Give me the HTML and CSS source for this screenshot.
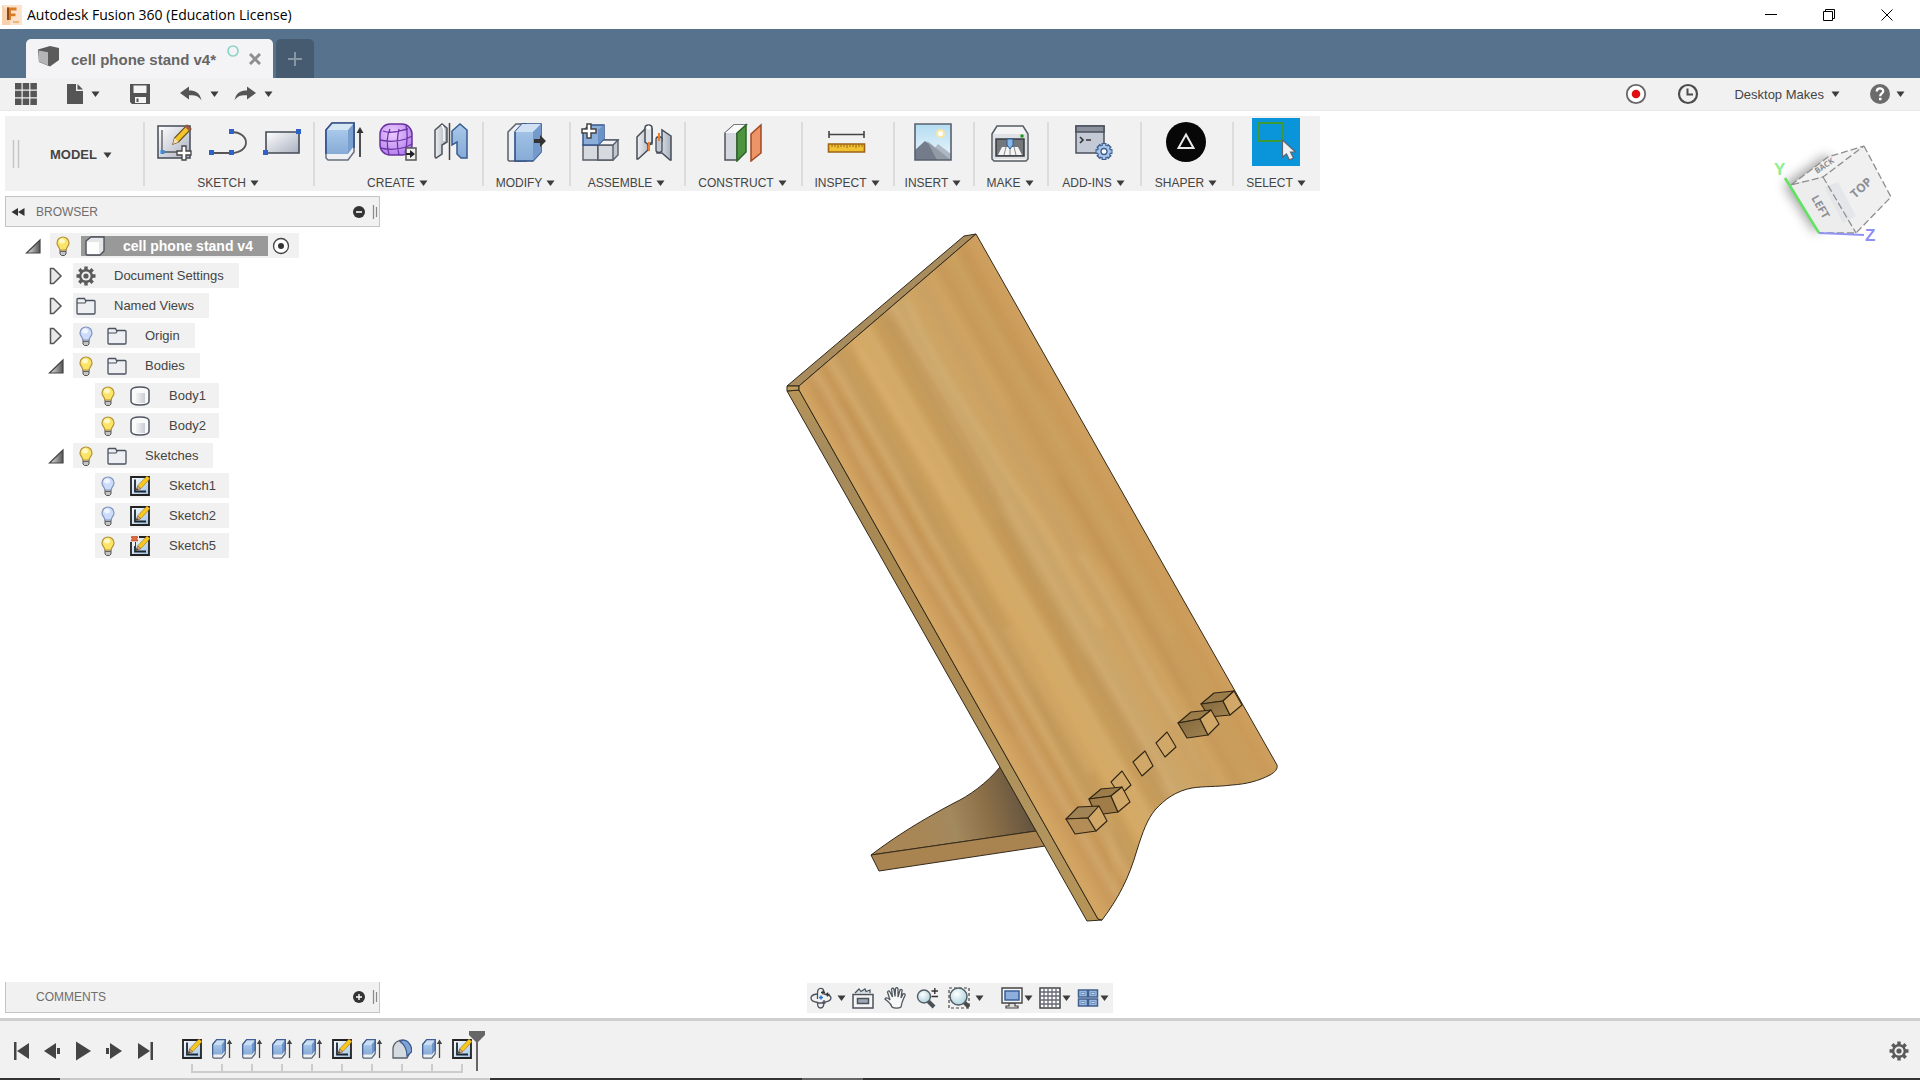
FILE: index.html
```html
<!DOCTYPE html>
<html lang="en">
<head>
    <meta charset="UTF-8">
    <meta name="viewport" content="width=device-width, initial-scale=1.0">
    <title>Autodesk Fusion 360 (Education License)</title>
    <link rel="stylesheet" href="styles.css">
</head>
<body>
    <!-- shared icons -->
    <svg class="sprite" aria-hidden="true">
        <defs>
            <linearGradient id="gBlue" x1="0" y1="0" x2="0" y2="1"><stop offset="0" stop-color="#a9c8ea"/><stop offset="1" stop-color="#86abd6"/></linearGradient>
            <linearGradient id="gGrey" x1="0" y1="0" x2="1" y2="1"><stop offset="0" stop-color="#ffffff"/><stop offset="1" stop-color="#a9b0bf"/></linearGradient>
            <linearGradient id="gSilver" x1="0" y1="0" x2="1" y2="0"><stop offset="0" stop-color="#eef0f2"/><stop offset="1" stop-color="#a7b0bc"/></linearGradient>
            <linearGradient id="gSky" x1="0" y1="0" x2="0" y2="1"><stop offset="0" stop-color="#b5dcf2"/><stop offset="1" stop-color="#eaf6fb"/></linearGradient>
            <linearGradient id="gPage" x1="0" y1="0" x2="1" y2="1"><stop offset="0" stop-color="#ffffff"/><stop offset="1" stop-color="#9cc3e6"/></linearGradient>
            <linearGradient id="gTri" x1="0" y1="0" x2="1" y2="0"><stop offset="0" stop-color="#eeeeee"/><stop offset="1" stop-color="#555555"/></linearGradient>
            <radialGradient id="gPurple" cx="0.4" cy="0.3" r="0.8"><stop offset="0" stop-color="#eccbff"/><stop offset="1" stop-color="#b078ec"/></radialGradient>
            <radialGradient id="gLens" cx="0.4" cy="0.35" r="0.7"><stop offset="0" stop-color="#ffffff"/><stop offset="1" stop-color="#a9d2dc"/></radialGradient>
        </defs>
        <symbol id="caret" viewBox="0 0 9 6"><path d="M0.500 0.500h8L4.500 6z" fill="#3c3c3c"/></symbol>
        <symbol id="gear" viewBox="0 0 20 20">
            <g stroke="#5a5a5a" stroke-width="3.400">
                <path d="M10 0.500v19M0.500 10h19M3.300 3.300l13.400 13.400M16.700 3.300L3.300 16.700"/>
            </g>
            <circle cx="10" cy="10" r="7" fill="#5a5a5a"/>
            <circle cx="10" cy="10" r="4.600" fill="#f0f0f0"/>
            <circle cx="10" cy="10" r="2.600" fill="#5a5a5a"/>
        </symbol>
        <symbol id="bulb-on" viewBox="0 0 20 20">
            <path d="M7 13h6v5l-1.500 1.500h-3L7 18z" fill="#c4c4c4" stroke="#555" stroke-width="1"/><path d="M7 15.500h6" stroke="#666"/>
            <path d="M10 1a6 6 0 0 1 6 6c0 3-2.500 4-3 7H7c-.5-3-3-4-3-7a6 6 0 0 1 6-6z" fill="#fbe568" stroke="#b5923a" stroke-width="1.200"/>
            <ellipse cx="9" cy="5" rx="3" ry="2.500" fill="#fff9c8"/>
        </symbol>
        <symbol id="bulb-off" viewBox="0 0 20 20">
            <path d="M7 13h6v5l-1.500 1.500h-3L7 18z" fill="#c4c4c4" stroke="#555" stroke-width="1"/><path d="M7 15.500h6" stroke="#666"/>
            <path d="M10 1a6 6 0 0 1 6 6c0 3-2.500 4-3 7H7c-.5-3-3-4-3-7a6 6 0 0 1 6-6z" fill="#ccdcfa" stroke="#8094bd" stroke-width="1.200"/>
            <ellipse cx="9" cy="5" rx="3" ry="2.500" fill="#f0f5ff"/>
        </symbol>
        <symbol id="folder" viewBox="0 0 20 20">
            <path d="M1 3.500a1 1 0 0 1 1-1h6.500l1 2H18a1 1 0 0 1 1 1V17a1 1 0 0 1-1 1H2a1 1 0 0 1-1-1z" fill="#edeff2" stroke="#4a525f" stroke-width="1.300"/>
            <path d="M1 7h8l1.500-2.500" fill="none" stroke="#4a525f" stroke-width="1.200"/>
        </symbol>
        <symbol id="body" viewBox="0 0 20 20">
            <path d="M1 5c0-3 4-4 9-4s9 1 9 4v10c0 3-4 4-9 4s-9-1-9-4z" fill="#fafafa" stroke="#4f5662" stroke-width="1.500"/>
            <path d="M6 7h9v10H6z" fill="url(#gSilver)" opacity="0.600"/>
        </symbol>
        <symbol id="sketch" viewBox="0 0 20 20">
            <path d="M1 1h18v18H1z" fill="url(#gPage)" stroke="#222" stroke-width="1.800"/>
            <path d="M5 3.500v12h11" fill="none" stroke="#1c2733" stroke-width="1.800"/>
            <path d="M6 14.500l2-5L17 0l3 2.500-9 10z" fill="#f8c81e" stroke="#a06d10" stroke-width="0.600"/>
            <path d="M6 14.500l1.800-4.500 3 2.500z" fill="#e2a987" stroke="#555" stroke-width="0.500"/>
            <path d="M6 14.500l1-2.200 1.200 1z" fill="#222"/>
        </symbol>
        <symbol id="extrude" viewBox="0 0 20 20">
            <path d="M0.700 5.500l4-4.800h8.500v14l-3.500 4.500h-8l-1-1z" fill="#eef0f3" stroke="#5a6470" stroke-width="1.200"/>
            <path d="M0.700 5.500h9v10h-9z" fill="url(#gBlue)"/>
            <path d="M0.700 5.500l4-4.800h8.500l-3.500 4.800z" fill="#c9def3"/><path d="M9.700 5.500l3.500-4.800v11l-3.500 4z" fill="#6d94c8"/>
            <path d="M0.700 15.500v-10l4-4.800h8.500v11" fill="none" stroke="#3f5f92" stroke-width="1.200"/>
            <path d="M17.500 19V3" stroke="#444" stroke-width="1.300"/><path d="M14.800 5h5.400l-2.700-4.500z" fill="#444"/>
        </symbol>
        <symbol id="expanded" viewBox="0 0 20 20"><path d="M3.500 17L17 4v13z" fill="url(#gTri)" stroke="#444" stroke-width="1.200"/></symbol>
        <symbol id="collapsed" viewBox="0 0 20 20"><path d="M4.500 2.500h3l7.500 7.500-7.500 7.500h-3z" fill="#e9e9e9" stroke="#555" stroke-width="1.500"/></symbol>
    </svg>

    <header class="titlebar">
        <svg class="app-logo" viewBox="0 0 20 20">
            <rect width="20" height="20" fill="#fbe3cd"/><path d="M0 0l8 8v12H0z" fill="#f7d1ad"/>
            <path d="M5 15V2.500h9.500v3H9v3h4.500v2.800H9V15z" fill="#d97b27"/><path d="M5 15V2.500h2V15z" fill="#8c4a17"/><path d="M11 17h6" stroke="#f2a25c" stroke-width="1.500"/>
        </svg>
        <span class="app-title">Autodesk Fusion 360 (Education License)</span>
        <div class="window-buttons">
            <button aria-label="Minimize"><svg viewBox="0 0 12 12"><path d="M0 5.500h12"/></svg></button>
            <button aria-label="Restore"><svg viewBox="0 0 12 12"><path d="M0.500 2.500h9v9h-9zM2.500 2.500v-2h9v9h-2"/></svg></button>
            <button aria-label="Close"><svg viewBox="0 0 12 12"><path d="M0.500 0.500l11 11M11.500 0.500l-11 11"/></svg></button>
        </div>
    </header>

    <nav class="tabs">
        <div class="tab">
            <svg class="tab-cube" viewBox="0 0 21 21"><path d="M0 3.500L12 0l9 2v12l-9 6.500L1 16z" fill="#5b5b5b"/><path d="M0.800 4.500l9.200 1.700v13.300l-9.200-4z" fill="#b5b5b5"/></svg>
            <span class="tab-name">cell phone stand v4*</span>
            <svg class="tab-status" viewBox="0 0 12 12"><circle cx="6" cy="6" r="5" fill="none" stroke="#8fd5c7" stroke-width="1.700"/></svg>
            <button class="tab-close" aria-label="Close tab"><svg viewBox="0 0 12 12"><path d="M1 1l10 10M11 1L1 11" stroke="#8e8e8e" stroke-width="3"/></svg></button>
        </div>
        <button class="tab-new" aria-label="New tab"><svg viewBox="0 0 14 14"><path d="M7 0v14M0 7h14" stroke="#8796a3" stroke-width="2"/></svg></button>
    </nav>

    <div class="quickbar">
        <button class="quick" aria-label="Data panel"><svg class="w24" viewBox="0 0 24 24"><path d="M1 1h6.500v6.500H1zM8.700 1h6.500v6.500H8.700zM16.400 1h6.500v6.500h-6.500zM1 8.700h6.500v6.500H1zM8.700 8.700h6.500v6.500H8.700zM16.400 8.700h6.500v6.500h-6.500zM1 16.400h6.500v6.500H1zM8.700 16.400h6.500v6.500H8.700zM16.400 16.400h6.500v6.500h-6.500z" fill="#555"/></svg></button>
        <button class="quick" aria-label="File"><svg class="w20" viewBox="0 0 20 22"><path d="M2 1h9v7h7v13H2zM12.500 1l5.500 5.500h-5.500z" fill="#555"/></svg><svg class="caret"><use href="#caret"/></svg></button>
        <button class="quick save" aria-label="Save"><svg class="w22" viewBox="0 0 22 22"><path d="M1 1h20v20H3l-2-2z" fill="#555"/><path d="M4.500 2.500h13V10h-13z" fill="#f5f5f5"/><path d="M6 14h11v6H6z" fill="#f5f5f5"/><path d="M7.500 15.500h2V19h-2z" fill="#555"/></svg></button>
        <div class="history">
            <button class="quick" aria-label="Undo"><svg class="w22" viewBox="0 0 22 22"><path d="M0 10l9-6.500v4c7 0 11 2.500 12.500 10-3-4.500-6.500-5.500-12.500-5.200v4.200z" fill="#555"/></svg><svg class="caret"><use href="#caret"/></svg></button>
            <button class="quick" aria-label="Redo"><svg class="w22" viewBox="0 0 22 22"><path d="M22 10l-9-6.500v4C6 7.500 2 10 .5 17.500c3-4.500 6.500-5.500 12.500-5.200v4.200z" fill="#555"/></svg><svg class="caret"><use href="#caret"/></svg></button>
        </div>
        <div class="account">
            <button class="quick" aria-label="Record"><svg class="w22" viewBox="0 0 22 22"><circle cx="11" cy="11" r="9.200" fill="#fff" stroke="#666" stroke-width="1.800"/><circle cx="11" cy="11" r="4.300" fill="#e01010"/></svg></button>
            <button class="quick" aria-label="Job status"><svg class="w22" viewBox="0 0 22 22"><circle cx="11" cy="11" r="9" fill="none" stroke="#4c4c4c" stroke-width="2.200"/><path d="M10.500 5.500v6H16" fill="none" stroke="#4c4c4c" stroke-width="2"/></svg></button>
            <button class="quick user">Desktop Makes<svg class="caret"><use href="#caret"/></svg></button>
            <button class="quick" aria-label="Help"><svg class="w20" viewBox="0 0 20 20"><circle cx="10" cy="10" r="10" fill="#6b6b6b"/><path d="M6.800 7.500c0-4 6.400-4 6.400-.3 0 2.300-3 2.300-3 5" fill="none" stroke="#fff" stroke-width="2.300"/><path d="M9 13.800h2.500v2.400H9z" fill="#fff"/></svg><svg class="caret"><use href="#caret"/></svg></button>
        </div>
    </div>

    <main class="workspace">
        <svg class="model" viewBox="0 111 1920 907">
            <defs>
                <linearGradient id="wood" gradientUnits="userSpaceOnUse" x1="799" y1="390" x2="1000" y2="274">
                    <stop offset="0" stop-color="#d3a563"/><stop offset="0.060" stop-color="#c99a5b"/><stop offset="0.100" stop-color="#cfa468"/>
                    <stop offset="0.140" stop-color="#c79857"/><stop offset="0.180" stop-color="#d0a768"/><stop offset="0.220" stop-color="#c59c5d"/>
                    <stop offset="0.270" stop-color="#c99d5b"/><stop offset="0.310" stop-color="#d5a965"/><stop offset="0.390" stop-color="#d3aa69"/>
                    <stop offset="0.430" stop-color="#c89c5a"/><stop offset="0.480" stop-color="#c39b5d"/><stop offset="0.530" stop-color="#cfa96e"/>
                    <stop offset="0.570" stop-color="#cba66a"/><stop offset="0.630" stop-color="#cfa463"/><stop offset="0.680" stop-color="#caa164"/>
                    <stop offset="0.740" stop-color="#cfa361"/><stop offset="0.790" stop-color="#c7995a"/><stop offset="0.860" stop-color="#cba15f"/>
                    <stop offset="0.920" stop-color="#ca9a58"/><stop offset="1" stop-color="#cfa160"/>
                </linearGradient>
                <linearGradient id="side" x1="0" y1="0" x2="0" y2="1"><stop offset="0" stop-color="#b79557"/><stop offset="0.120" stop-color="#a58b5d"/><stop offset="0.320" stop-color="#aa8951"/><stop offset="0.550" stop-color="#ad8b52"/><stop offset="0.800" stop-color="#b1955f"/><stop offset="1" stop-color="#b69355"/></linearGradient>
                <linearGradient id="leg" gradientUnits="userSpaceOnUse" x1="915" y1="835" x2="1025" y2="805"><stop offset="0" stop-color="#a88655"/><stop offset="0.350" stop-color="#a3895e"/><stop offset="0.650" stop-color="#8d7048"/><stop offset="1" stop-color="#675640"/></linearGradient>
                <linearGradient id="cubeDark" x1="0" y1="0" x2="1" y2="1"><stop offset="0" stop-color="#82683e"/><stop offset="1" stop-color="#a2834f"/></linearGradient>
                <filter id="soft" x="-0.5" y="-0.1" width="2" height="1.200"><feGaussianBlur stdDeviation="3"/></filter>
                <clipPath id="board"><path id="boardPath" d="M799 386L976 234L1172 580L1277 765C1278 769 1275 772 1270 775C1258 781 1247 784 1232 785C1216 787 1205 786 1192 788C1176 791 1165 799 1155 810C1147 820 1143 831 1137 850C1129 878 1118 899 1102 920L1098 919L799 390Z"/></clipPath>
            </defs>
            <g stroke="#33291a" stroke-width="1" stroke-linejoin="round">
                <path d="M1000 767C987 783 969 796 954 803C922 820 896 836 871 855L1036 831Z" fill="url(#leg)"/>
                <path d="M871 855L1036 831L1045 846L879 871Z" fill="#aa8450"/>
                <path d="M787 391L799 390L1098 919L1102 920L1087 921Z" fill="url(#side)"/>
                <path d="M787 386L964 236L976 234L799 386Z" fill="#a88c5d"/>
                <path d="M787 386H799V390L787 391Z" fill="#bd9b5b"/>
            </g>
            <use href="#boardPath" fill="url(#wood)"/>
            <!-- grain -->
            <g clip-path="url(#board)"><g filter="url(#soft)" fill="none" stroke-linecap="round" opacity="0.750">
                <path d="M816 388C850 450 884 520 920 570M842 402C870 440 900 498 928 560M930 580C960 630 985 680 1010 730M1035 690C1050 730 1080 780 1110 850" stroke="#bb8749" stroke-width="3" opacity="0.450"/>
                <path d="M890 320C930 380 965 430 1000 505M1000 520C1030 590 1060 620 1080 680M962 250C990 310 1010 340 1040 390M1060 480C1085 520 1110 560 1140 610" stroke="#bc8a4c" stroke-width="5" opacity="0.400"/>
                <path d="M908 302C935 370 975 420 1010 480C1050 530 1070 580 1100 625M1080 555C1115 600 1135 660 1175 720" stroke="#dcb980" stroke-width="6" opacity="0.550"/>
                <path d="M860 350C900 420 930 460 950 500M1010 630C1035 680 1060 710 1090 770" stroke="#deb376" stroke-width="8" opacity="0.500"/>
                <path d="M1060 345C1090 430 1150 540 1190 610M1175 640C1200 690 1225 730 1250 770M1085 660C1110 700 1130 730 1160 780" stroke="#bd8748" stroke-width="4" opacity="0.350"/>
                <path d="M850 440C890 510 935 590 975 640M1110 800C1105 840 1120 860 1115 890M1130 640C1160 690 1180 720 1200 770" stroke="#d9b377" stroke-width="4" opacity="0.500"/>
                <path d="M1010 410C1040 460 1060 500 1100 560M1120 580C1140 610 1160 640 1185 690M910 480C940 540 960 580 990 620" stroke="#b78d52" stroke-width="3" opacity="0.450"/>
            </g></g>
            <use href="#boardPath" fill="none" stroke="#33291a" stroke-width="1"/>
            <g stroke="#2f2414" stroke-width="1.100" stroke-linejoin="round">
                <path d="M1111 782L1122 771L1131 785L1120 795ZM1133 762L1145 751L1153 766L1142 776ZM1156 743L1167 732L1176 747L1165 757Z" fill="#d2a868"/>
                <path d="M1201 704L1214 693L1234 691L1223 701Z" fill="#9c7d4a"/><path d="M1201 704L1223 701L1230 715L1209 717Z" fill="url(#cubeDark)"/><path d="M1223 701L1234 691L1242 705L1230 715Z" fill="#d2a868"/>
                <path d="M1178 723L1191 712L1211 710L1200 719Z" fill="#9c7d4a"/><path d="M1178 723L1200 719L1208 735L1187 738Z" fill="url(#cubeDark)"/><path d="M1200 719L1211 710L1219 724L1208 735Z" fill="#d2a868"/>
                <path d="M1089 799L1101 789L1122 787L1111 796Z" fill="#9c7d4a"/><path d="M1089 799L1111 796L1118 812L1096 815Z" fill="#a07c48"/><path d="M1111 796L1122 787L1130 802L1118 812Z" fill="#d2a868"/>
                <path d="M1066 819L1078 807L1099 806L1088 818Z" fill="#a08455"/><path d="M1066 819L1088 818L1096 831L1075 834Z" fill="#b38d55"/><path d="M1088 818L1099 806L1107 821L1096 831Z" fill="#d2a868"/>
            </g>
        </svg>

        <svg class="viewcube" viewBox="1760 130 140 120">
            <defs><filter id="shade" x="-0.5" y="-0.5" width="2" height="2"><feGaussianBlur stdDeviation="6"/></filter></defs>
            <path d="M1784 185L1826 155L1850 180L1816 234Z" fill="#777" opacity="0.700" filter="url(#shade)"/>
            <path d="M1791 185L1828 157L1864 146L1823 177Z" fill="#f2f2f2"/>
            <path d="M1791 185L1823 177L1856 233H1819Z" fill="#ededed"/>
            <path d="M1823 177L1864 146L1891 197L1856 233Z" fill="#f0f0f0"/>
            <path d="M1824 187L1838 182L1856 216L1843 223Z" fill="#e4e6e9"/>
            <path d="M1791 185L1828 157L1864 146L1823 177ZM1823 177L1856 233M1864 146L1891 197L1856 233H1819" fill="none" stroke="#8e8e8e" stroke-width="1.300" stroke-dasharray="7 3"/>
            <path d="M1785 178L1819 233" stroke="#62e262" stroke-width="2.500"/>
            <path d="M1819 233L1864 235" stroke="#9292f5" stroke-width="2"/>
            <text class="axis-y" x="1774" y="175">Y</text>
            <text class="axis-z" x="1865" y="241">Z</text>
            <text class="face" transform="translate(1855 199) rotate(-42)">TOP</text>
            <text class="face face-left" transform="translate(1811 198) rotate(60)">LEFT</text>
            <text class="face face-back" transform="translate(1817 174) rotate(-34)">BACK</text>
        </svg>

        <section class="ribbon">
            <div class="group switcher">
                <svg class="grip" viewBox="0 0 8 28"><path d="M1.500 0v28M6.500 0v28" stroke="#c6c6c6" stroke-width="1.500"/></svg>
                <button class="model-button">MODEL<svg class="caret"><use href="#caret"/></svg></button>
            </div>
            <div class="group">
                <div class="tools">
                    <svg viewBox="0 0 40 40"><path d="M4 4h32v32H4z" fill="url(#gGrey)" stroke="#444a55" stroke-width="1.500"/><path d="M8 8v22h20" fill="none" stroke="#555" stroke-width="1.300"/><path d="M6.500 28h4v4h-4z" fill="#3b8de0"/><path d="M19 22l1.500-6L33 3l4 4-12.500 13z" fill="#f3c52b" stroke="#6e5320" stroke-width="1.200"/><path d="M19 22l1.500-6 4 4z" fill="#f7e0b8"/><path d="M31 5l2-2 4 4-2 2z" fill="#a85a45"/><path d="M28 24h4v5h5v4h-5v5h-4v-5h-5v-4h5z" fill="#fff" stroke="#444" stroke-width="1.300"/></svg>
                    <svg viewBox="0 0 40 40"><path d="M3 31h20c20 0 20-21 0-21" fill="none" stroke="#555" stroke-width="1.800"/><path d="M1 28h5v5H1zM21 28h5v5h-5zM21 7h5v5h-5z" fill="#2f62c8"/></svg>
                    <svg viewBox="0 0 40 40"><path d="M4 10h33v21H4z" fill="url(#gGrey)" stroke="#444a55" stroke-width="1.600"/><path d="M34 7h5v5h-5zM1 28h5v5H1z" fill="#2f62c8"/></svg>
                </div>
                <button class="group-label">SKETCH<svg class="caret"><use href="#caret"/></svg></button>
            </div>
            <div class="group">
                <div class="tools">
                    <svg viewBox="0 0 40 40"><path d="M2 8l6-7h22v29l-6 8H4l-2-2z" fill="#eef0f3" stroke="#66707c" stroke-width="1.500"/><path d="M2 8h22v24H2z" fill="url(#gBlue)"/><path d="M2 8l6-7h22l-6 7z" fill="#d5e6f5"/><path d="M24 8l6-7v23l-6 8z" fill="#799fd0"/><path d="M2 32V8l6-7h22v25" fill="none" stroke="#33528a" stroke-width="1.700"/><path d="M36 35V9" stroke="#333" stroke-width="1.700"/><path d="M32.500 11h7L36 5z" fill="#333"/></svg>
                    <svg viewBox="0 0 40 40"><rect x="2" y="2" width="32" height="31" rx="10" fill="url(#gPurple)" stroke="#69329f" stroke-width="1.500"/><path d="M12 7c-4 8-3 18-1 26M21 7c-2 8-2 18 0 26M28 4c2 7 1 20-1 27M2 18c8 2 17 2 26-1l6-3M2 26c8 2 17 2 26-1l6-3M5 9c8 3 15 0 25-2" fill="none" stroke="#6b35a5" stroke-width="1.300"/><path d="M28 26h10v12H28z" fill="#f0f0f0" stroke="#555" stroke-width="1.500"/><path d="M28 32h5" stroke="#222" stroke-width="2"/><path d="M32 28l5 4-5 4z" fill="#222"/></svg>
                    <svg viewBox="0 0 40 40"><path d="M3 8l7-6 5 4v14l-5 3v9l-6 4-1-1z" fill="url(#gSilver)" stroke="#4d535c" stroke-width="1.500"/><path d="M35 8l-7-6-8 7v14l5-3v12l4 4h6z" fill="url(#gBlue)" stroke="#365b90" stroke-width="1.500"/><path d="M17.500 1v37" stroke="#444" stroke-width="1.500"/><path d="M10 3l2 5v11" fill="none" stroke="#fff" stroke-width="1.500"/></svg>
                </div>
                <button class="group-label">CREATE<svg class="caret"><use href="#caret"/></svg></button>
            </div>
            <div class="group">
                <div class="tools">
                    <svg viewBox="0 0 40 40"><path d="M2 10l8-8h10v37H3l-1-1z" fill="#eef0f4" stroke="#59606b" stroke-width="1.500"/><path d="M9 10l7-8h19v28l-8 9H9z" fill="url(#gBlue)" stroke="#2f4f85" stroke-width="1.600"/><path d="M9 10l7-8h19l-8 8z" fill="#cfe1f3"/><path d="M27 10l8-8v28l-8 9z" fill="#7499cb"/><path d="M28 17h6v-4l6 6-6 6v-4h-6z" fill="#333"/></svg>
                </div>
                <button class="group-label">MODIFY<svg class="caret"><use href="#caret"/></svg></button>
            </div>
            <div class="group">
                <div class="tools">
                    <svg viewBox="0 0 40 40"><g stroke="#565d68" stroke-width="1.400"><path d="M3 23h15v15H3z" fill="#d6d9de"/><path d="M18 23l5-5h15v15l-5 5H18z" fill="#c4c8cf"/><path d="M18 23h15v15H18z" fill="#d6d9de"/><path d="M18 23l5-5h15l-5 5z" fill="#f2f3f5"/></g><path d="M3 9l6-6h15v14l-6 6H3z" fill="#8caeda" stroke="#34568d" stroke-width="1.500"/><path d="M18 8l6-5v14l-6 6z" fill="#6b92c6"/><path d="M7 2h4v5h5v4h-5v5H7v-5H2V7h5z" fill="#fff" stroke="#444" stroke-width="1.500"/></svg>
                    <svg viewBox="0 0 40 40"><path d="M3 15L11 7h7v15l-4 1v5L4 37H3z" fill="url(#gSilver)" stroke="#454c58" stroke-width="1.500"/><path d="M11 6c0-4 7-4 7 0v14l-3 3-4-3z" fill="#dfe2e6" stroke="#454c58" stroke-width="1.500"/><circle cx="14.500" cy="5.500" r="2" fill="#fff"/><path d="M37 14l-9-6v11h-5v12h5l8 7h1z" fill="url(#gSilver)" stroke="#454c58" stroke-width="1.500"/><path d="M22 17c0-3 6-3 6 0v12c-2 2-4 2-6 0z" fill="#c3c9d2" stroke="#454c58" stroke-width="1.300"/><path d="M15 20v9M25 11v8" stroke="#ef7c26" stroke-width="2"/></svg>
                </div>
                <button class="group-label">ASSEMBLE<svg class="caret"><use href="#caret"/></svg></button>
            </div>
            <div class="group">
                <div class="tools">
                    <svg viewBox="0 0 40 40"><path d="M2 11l9-8h12L14 11v27H2z" fill="#d4d7de" stroke="#4d535c" stroke-width="1.500"/><path d="M2 11l9-8h12l-9 8z" fill="#fafafa"/><path d="M14 11l9-8v27l-9 9z" fill="#4e9440" stroke="#2c6426" stroke-width="1.500"/><path d="M28 12l10-9v28l-10 8z" fill="#ed9566" stroke="#a04a23" stroke-width="1.500"/></svg>
                </div>
                <button class="group-label">CONSTRUCT<svg class="caret"><use href="#caret"/></svg></button>
            </div>
            <div class="group">
                <div class="tools">
                    <svg viewBox="0 0 40 40"><path d="M2 9v7M37 9v7M2 12.500h35" stroke="#454545" stroke-width="1.600"/><path d="M1.500 22h36v8h-36z" fill="#f0c231" stroke="#9d6419" stroke-width="1.600"/><path d="M5 22v3M8 22v3M11 22v4M14 22v3M17 22v3M20 22v4M23 22v3M26 22v3M29 22v4M32 22v3M35 22v3" stroke="#9d6419"/></svg>
                </div>
                <button class="group-label">INSPECT<svg class="caret"><use href="#caret"/></svg></button>
            </div>
            <div class="group">
                <div class="tools">
                    <svg viewBox="0 0 40 40"><path d="M2 2h36v36H2z" fill="url(#gSky)"/><path d="M17 32l8-10 13 10v6H17z" fill="#adb9c2"/><path d="M2 28l10-9 10 7 14 12H2z" fill="#747b8a"/><path d="M14 19l24 19H24z" fill="#939ba7"/><circle cx="27.500" cy="11.500" r="4.500" fill="#fae5a0"/><circle cx="27.500" cy="11.500" r="2.500" fill="#fff"/><path d="M2 2h36v36H2z" fill="none" stroke="#59616d" stroke-width="1.600"/></svg>
                </div>
                <button class="group-label">INSERT<svg class="caret"><use href="#caret"/></svg></button>
            </div>
            <div class="group">
                <div class="tools">
                    <svg viewBox="0 0 40 40"><path d="M2 12l5-8h26l5 8v25l-2 2H4l-2-2z" fill="#f4f4f5" stroke="#565c66" stroke-width="1.500"/><path d="M3 12h34v25H3z" fill="#dfe1e4"/><path d="M6 17h28v17H6z" fill="#73767b" stroke="#383b40" stroke-width="1.500"/><path d="M12 25h16l4 8H8z" fill="#f4f4f4"/><path d="M16 25l-2 8M20 25v8M24 25l2 8" stroke="#888"/><path d="M17 17h6v6l-3 4-3-4z" fill="#88b8e6" stroke="#2c5f9d"/><path d="M30.500 12.500h3v3h-3z" fill="#159515"/></svg>
                </div>
                <button class="group-label">MAKE<svg class="caret"><use href="#caret"/></svg></button>
            </div>
            <div class="group">
                <div class="tools">
                    <svg viewBox="0 0 40 40"><path d="M2 4h28v27H2z" fill="#c3c9d5" stroke="#4b525e" stroke-width="1.500"/><path d="M2 4h28v6H2z" fill="#8b919d" stroke="#4b525e" stroke-width="1.500"/><path d="M6 15l3 3-3 3M12 18h5" fill="none" stroke="#333" stroke-width="1.600"/><g stroke="#3e5f91" stroke-width="5"><path d="M30 21v17M21.500 29.500h17M24 23.500l12 12M36 23.500l-12 12"/></g><g stroke="#a9c5e8" stroke-width="2.400"><path d="M30 22v15M22.500 29.500h15M25 24.500l10 10M35 24.500l-10 10"/></g><circle cx="30" cy="29.500" r="6" fill="#a9c5e8"/><circle cx="30" cy="29.500" r="3" fill="#fff" stroke="#3e5f91" stroke-width="1.300"/></svg>
                </div>
                <button class="group-label">ADD-INS<svg class="caret"><use href="#caret"/></svg></button>
            </div>
            <div class="group">
                <div class="tools">
                    <svg viewBox="0 0 40 40"><circle cx="20" cy="20" r="20" fill="#070707"/><path d="M20 12.500L27.500 26h-15z" fill="none" stroke="#e8e8e8" stroke-width="2"/></svg>
                </div>
                <button class="group-label">SHAPER<svg class="caret"><use href="#caret"/></svg></button>
            </div>
            <div class="group">
                <div class="tools">
                    <svg class="selected" viewBox="0 0 48 48"><path d="M6 5h25v18H6z" fill="none" stroke="#3e9a35" stroke-width="2"/><path d="M30.500 22v17l4-3 3 6 4-2-3-6h5z" fill="#f0f2f5" stroke="#5d6670" stroke-width="1.200"/></svg>
                </div>
                <button class="group-label">SELECT<svg class="caret"><use href="#caret"/></svg></button>
            </div>
        </section>

        <aside class="browser">
            <div class="panel">
                <button class="panel-icon" aria-label="Collapse"><svg viewBox="0 0 14 14"><path d="M7 3v8L0.500 7zM13.500 3v8L7 7z" fill="#333"/></svg></button>
                <span class="panel-title">BROWSER</span>
                <button class="panel-icon" aria-label="Hide"><svg viewBox="0 0 14 14"><circle cx="7" cy="7" r="6" fill="#333"/><path d="M4 7h6" stroke="#fff" stroke-width="1.600"/></svg></button>
                <svg class="panel-grip" viewBox="0 0 6 14"><path d="M1.500 0v14M4.500 2v10" stroke="#888" stroke-width="1.200"/></svg>
            </div>
            <ul class="tree">
                <li>
                    <div class="row">
                        <svg><use href="#expanded"/></svg>
                        <div class="node root"><svg><use href="#bulb-on"/></svg>
                            <span class="active"><svg viewBox="0 0 20 20"><path d="M1 5l5-4h13v14l-4 4H2l-1-1z" fill="#e4e6e9" stroke="#4a4f57" stroke-width="1.300"/><path d="M2 6h12v12H2z" fill="#fdfdfd"/></svg>cell phone stand v4</span>
                            <svg viewBox="0 0 20 20"><circle cx="10" cy="10" r="7.500" fill="#fff" stroke="#444" stroke-width="1.300"/><circle cx="10" cy="10" r="3" fill="#333"/></svg>
                        </div>
                    </div>
                    <ul>
                        <li><div class="row"><svg><use href="#collapsed"/></svg><div class="node"><svg><use href="#gear"/></svg><span>Document Settings</span></div></div></li>
                        <li><div class="row"><svg><use href="#collapsed"/></svg><div class="node"><svg><use href="#folder"/></svg><span>Named Views</span></div></div></li>
                        <li><div class="row"><svg><use href="#collapsed"/></svg><div class="node"><svg><use href="#bulb-off"/></svg><svg><use href="#folder"/></svg><span>Origin</span></div></div></li>
                        <li>
                            <div class="row"><svg><use href="#expanded"/></svg><div class="node"><svg><use href="#bulb-on"/></svg><svg><use href="#folder"/></svg><span>Bodies</span></div></div>
                            <ul class="leaves">
                                <li><div class="row"><div class="node"><svg><use href="#bulb-on"/></svg><svg><use href="#body"/></svg><span>Body1</span></div></div></li>
                                <li><div class="row"><div class="node"><svg><use href="#bulb-on"/></svg><svg><use href="#body"/></svg><span>Body2</span></div></div></li>
                            </ul>
                        </li>
                        <li>
                            <div class="row"><svg><use href="#expanded"/></svg><div class="node"><svg><use href="#bulb-on"/></svg><svg><use href="#folder"/></svg><span>Sketches</span></div></div>
                            <ul class="leaves">
                                <li><div class="row"><div class="node"><svg><use href="#bulb-off"/></svg><svg><use href="#sketch"/></svg><span>Sketch1</span></div></div></li>
                                <li><div class="row"><div class="node"><svg><use href="#bulb-off"/></svg><svg><use href="#sketch"/></svg><span>Sketch2</span></div></div></li>
                                <li><div class="row"><div class="node"><svg><use href="#bulb-on"/></svg><svg viewBox="0 0 20 20"><use href="#sketch" width="20" height="20"/><path d="M0 0h9v6H5v4H4V6H0z" fill="#f0f0f0"/><path d="M1.500 0.500h6v1.500H6.500l1.500 3H1l1.500-3h-1z" fill="#e06b3c" stroke="#b53d1c" stroke-width="0.600"/></svg><span>Sketch5</span></div></div></li>
                            </ul>
                        </li>
                    </ul>
                </li>
            </ul>
        </aside>

        <div class="canvas-foot">
            <div class="panel comments">
                <span class="panel-title">COMMENTS</span>
                <button class="panel-icon" aria-label="Show comments"><svg viewBox="0 0 14 14"><circle cx="7" cy="7" r="6" fill="#333"/><path d="M4 7h6M7 4v6" stroke="#fff" stroke-width="1.400"/></svg></button>
                <svg class="panel-grip" viewBox="0 0 6 14"><path d="M1.500 0v14M4.500 2v10" stroke="#888" stroke-width="1.200"/></svg>
            </div>
            <div class="navbar">
                <button class="nav-wide" aria-label="Orbit"><svg viewBox="0 0 22 22"><g fill="none" stroke="#4c535d" stroke-width="1.300"><path d="M14 7c5 .5 7 2.500 7 4 0 2.500-4 4-9 4.500M8 15.500C3 15 1 13 1 11s2-3.500 6-4"/><path d="M7.500 12V6c0-6 6-6 6.500-1M14 13v2c0 4-1.500 6-3.500 6s-3-2-3-5h8"/></g><path d="M9 10.500h4M11 8.500v4" stroke="#1c78d8" stroke-width="1.500"/><path d="M13 3.500v4M11 5.500h4M17.500 5.500v4M15.500 7.500h4" stroke="#333" stroke-width="1.300"/></svg><svg class="caret"><use href="#caret"/></svg></button>
                <button aria-label="Look at"><svg viewBox="0 0 22 22"><path d="M3 6l4-4 2 2.500L13 2l1 2.500 4-1.500v3" fill="#d5dee0" stroke="#4c535d" stroke-width="1.200"/><path d="M1 7.500h20V21H1z" fill="#f5f5f5" stroke="#4c535d" stroke-width="1.500"/><path d="M5.500 11.500h11v5h-11z" fill="#9da7b8" stroke="#4c535d" stroke-width="1.500"/></svg></button>
                <button aria-label="Pan"><svg viewBox="0 0 22 22"><path d="M8 20c-1-4-4-5-7-8 1-2 3-1 5 1L3.500 5c1-2 2-1 2.500 0l2.500 5-1-8c1-1.500 2-1 2.500.5l1 7 .5-8c1-1.500 2-1 2.500.5v8l2-7c1-1 2.500-.5 2 1L17 11l2-4c1-1 2.500 0 2 1.500C19 13 18 14 17 20c-2 1.500-7 1.500-9 0z" fill="#f8f8f8" stroke="#50575f" stroke-width="1.300"/></svg></button>
                <button aria-label="Zoom"><svg viewBox="0 0 22 22"><path d="M12 14l6 6" stroke="#4a5157" stroke-width="4"/><circle cx="8" cy="9.500" r="6.500" fill="url(#gLens)" stroke="#555e66" stroke-width="1.400"/><path d="M15.500 4H22M18.800 1v6M15.500 9.500H22" stroke="#333" stroke-width="1.400"/></svg></button>
                <button class="nav-wide" aria-label="Zoom window"><svg viewBox="0 0 22 22"><path d="M1 1h20v20H1z" fill="none" stroke="#444" stroke-width="1.200" stroke-dasharray="3 2"/><path d="M15 14l6 6" stroke="#4a4a4a" stroke-width="4"/><circle cx="10.500" cy="9.500" r="8.500" fill="url(#gLens)" stroke="#555e66" stroke-width="1.500"/></svg><svg class="caret"><use href="#caret"/></svg></button>
                <div class="nav-views">
                    <button aria-label="Display settings"><svg viewBox="0 0 22 22"><path d="M8 16h6v3h3v2H5v-2h3z" fill="#ddd" stroke="#444" stroke-width="1.200"/><path d="M1 1h20v15H1z" fill="#f6f6f6" stroke="#444" stroke-width="1.400"/><path d="M4 4h14v9H4z" fill="#8eaedb" stroke="#37629b" stroke-width="1.500"/></svg><svg class="caret"><use href="#caret"/></svg></button>
                    <button aria-label="Grid and snaps"><svg viewBox="0 0 22 22"><path d="M1 1h20v20H1z" fill="#fff" stroke="#444" stroke-width="1.500"/><path d="M5 1v20M9 1v20M13 1v20M17 1v20M1 5h20M1 9h20M1 13h20M1 17h20" stroke="#656a75" stroke-width="1.300"/></svg><svg class="caret"><use href="#caret"/></svg></button>
                    <button aria-label="Viewports"><svg viewBox="0 0 22 22"><g fill="#9bb9e0" stroke="#3f5f8d" stroke-width="1.500"><path d="M1.500 3h9v7h-9zM11.500 3h9v7h-9zM1.500 12h9v7h-9zM11.500 12h9v7h-9z"/></g><path d="M4 5.500h4v2H4zM14 5.500h4v2h-4zM4 14.500h4v2H4zM14 14.500h4v2h-4z" fill="#c6d9f0" stroke="#6185b5" stroke-width="0.800"/></svg><svg class="caret"><use href="#caret"/></svg></button>
                </div>
            </div>
        </div>
    </main>

    <footer class="timeline">
        <div class="playback">
            <button aria-label="Go to start"><svg viewBox="0 0 20 20"><path d="M3 1h2.500v18H3zM18 2v16L6 10z" fill="#444"/></svg></button>
            <button aria-label="Step back"><svg viewBox="0 0 20 20"><path d="M14 2v16L2 10zM15 7h3v6h-3z" fill="#444"/></svg></button>
            <button aria-label="Play"><svg viewBox="0 0 20 20"><path d="M3 0.500v19L18 10z" fill="#444"/></svg></button>
            <button aria-label="Step forward"><svg viewBox="0 0 20 20"><path d="M6 2v16l12-8zM2 7h3v6H2z" fill="#444"/></svg></button>
            <button aria-label="Go to end"><svg viewBox="0 0 20 20"><path d="M15.500 1H18v18h-2.500zM3 2v16l12-8z" fill="#444"/></svg></button>
        </div>
        <ol class="features">
            <li><svg><use href="#sketch"/></svg></li>
            <li><svg><use href="#extrude"/></svg></li>
            <li><svg><use href="#extrude"/></svg></li>
            <li><svg><use href="#extrude"/></svg></li>
            <li><svg><use href="#extrude"/></svg></li>
            <li><svg><use href="#sketch"/></svg></li>
            <li><svg><use href="#extrude"/></svg></li>
            <li><svg viewBox="0 0 20 20"><path d="M1 19V9c1-6 6-8 10-8l9 9-5 9z" fill="#d5d9e0" stroke="#57606c" stroke-width="1.300"/><path d="M8 2.500c3-2 6-1.500 8 .5 3 3 4 6 3.500 10L15 17c0-6-2-11-7-14.500z" fill="#7fa4d4" stroke="#35588f" stroke-width="1.200"/></svg></li>
            <li><svg><use href="#extrude"/></svg></li>
            <li><svg><use href="#sketch"/></svg></li>
            <li class="marker"><svg viewBox="0 0 16 40"><path d="M0 0h16v4L9 11v29H7V11L0 4z" fill="#666"/></svg></li>
        </ol>
        <button class="settings" aria-label="Timeline settings"><svg><use href="#gear"/></svg></button>
    </footer>
    <div class="taskbar"><span></span><i></i></div>
</body>
</html>
```
FILE: styles.css
```css
* {
    box-sizing: border-box;
}

body {
    margin: 0;
    height: 100vh;
    display: flex;
    flex-direction: column;
    overflow: hidden;
    background-color: #fff;
    color: #444;
    font-family: "Liberation Sans", Arial, sans-serif;
    font-size: 13px;
}

button {
    display: flex;
    align-items: center;
    padding: 0;
    border: none;
    background: none;
    color: inherit;
    font: inherit;
    cursor: pointer;
}

ul, ol {
    list-style: none;
    margin: 0;
    padding: 0;
}

svg {
    display: block;
    flex: none;
}

.sprite {
    position: absolute;
    width: 0;
    height: 0;
}

.caret {
    width: 9px;
    height: 6px;
}

/* title bar */
.titlebar {
    display: flex;
    align-items: center;
    height: 29px;
    padding: 0 4px 0 2px;
    gap: 5px;
}

.app-logo {
    width: 20px;
    height: 20px;
}

.app-title {
    color: #000;
    font-family: "Open Sans", "Noto Sans", sans-serif;
    font-size: 14px;
}

.window-buttons {
    display: flex;
    margin-left: auto;
}

.window-buttons button {
    width: 58px;
    height: 29px;
    justify-content: center;
}

.window-buttons svg {
    width: 12px;
    height: 12px;
    fill: none;
    stroke: #000;
}

/* document tabs */
.tabs {
    display: flex;
    align-items: flex-end;
    gap: 3px;
    height: 49px;
    padding-left: 26px;
    background-color: #56728c;
}

.tab {
    display: flex;
    align-items: center;
    height: 39px;
    padding: 0 12px;
    border-radius: 5px 5px 0 0;
    background-color: #f4f4f6;
}

.tab-cube {
    width: 21px;
    height: 21px;
    margin: 0 12px 4px 0;
}

.tab-name {
    color: #666;
    font-size: 15px;
    font-weight: bold;
    padding-top: 2px;
}

.tab-status {
    width: 12px;
    height: 12px;
    margin: 0 10px 16px 11px;
}

.tab-close svg {
    width: 12px;
    height: 12px;
}

.tab-new {
    justify-content: center;
    width: 38px;
    height: 39px;
    border-radius: 5px 5px 0 0;
    background-color: #465a70;
}

.tab-new svg {
    width: 14px;
    height: 14px;
}

/* quick access bar */
.quickbar {
    display: flex;
    align-items: center;
    gap: 27px;
    height: 33px;
    padding: 0 15px 0 14px;
    border-bottom: 1px solid #e8e8e8;
    background-color: #f1f1f1;
}

.quick {
    gap: 6px;
}

.save {
    padding: 0 2px;
}

.w20 {
    width: 20px;
    height: 22px;
}

.w22 {
    width: 22px;
    height: 22px;
}

.w24 {
    width: 24px;
    height: 24px;
}

.history {
    display: flex;
    gap: 15px;
}

.history .quick {
    gap: 8px;
}

.account {
    display: flex;
    align-items: center;
    gap: 30px;
    margin-left: auto;
}

.account .user {
    gap: 7px;
    padding-left: 5px;
}

/* canvas */
.workspace {
    position: relative;
    flex: 1;
    display: flex;
    flex-direction: column;
    align-items: flex-start;
    min-height: 0;
    padding: 5px;
}

.model {
    position: absolute;
    inset: 0;
    width: 100%;
    height: 100%;
}

.viewcube {
    position: absolute;
    top: 19px;
    right: 20px;
    width: 140px;
    height: 120px;
}

.axis-y,
.axis-z {
    font-size: 17px;
    font-weight: bold;
    fill: #8df08d;
}

.axis-z {
    fill: #8f8ff5;
}

.face {
    fill: #8b8f95;
    font-family: "Open Sans", sans-serif;
    font-size: 12px;
    font-weight: bold;
}

.face-left {
    font-size: 11px;
}

.face-back {
    font-size: 8px;
}

/* ribbon */
.ribbon {
    position: relative;
    display: grid;
    grid-template-columns: 138px 170px 169px 87px 115px 117px 92px 80px 74px 93px 92px 88px;
    height: 75px;
    background-color: #f1f1f1;
}

.group {
    position: relative;
    display: flex;
    flex-direction: column;
    align-items: center;
    padding-top: 2px;
}

.group + .group {
    background: linear-gradient(#dcdcdc, #dcdcdc) left center / 2px 64px no-repeat;
}

.switcher {
    flex-direction: row;
    gap: 30px;
    padding: 0 0 0 7px;
}

.grip {
    width: 8px;
    height: 28px;
}

.model-button {
    gap: 6px;
    padding-top: 2px;
    font-weight: bold;
}

.tools {
    display: flex;
    align-items: center;
    gap: 14px;
    height: 48px;
}

.tools svg {
    width: 40px;
    height: 40px;
}

.tools .selected {
    width: 48px;
    height: 48px;
    background-color: #0a94da;
}

.group-label {
    gap: 4px;
    padding-top: 9px;
    font-size: 12px;
    line-height: 16px;
}

/* side panels */
.browser {
    position: relative;
    margin-top: 5px;
}

.panel {
    display: flex;
    align-items: center;
    width: 375px;
    height: 31px;
    padding: 0 1px 0 5px;
    border: 1px solid #c4c4c4;
    background-color: #f1f1f1;
}

.panel-icon svg {
    width: 14px;
    height: 14px;
}

.panel-title {
    flex: 1;
    padding-left: 11px;
    color: #6e6e6e;
    font-size: 12px;
}

.panel-grip {
    width: 6px;
    height: 14px;
    margin-left: 6px;
}

.tree {
    margin-top: 6px;
    padding-left: 18px;
}

.tree ul {
    padding-left: 23px;
}

.tree .leaves {
    padding-left: 49px;
}

.row {
    display: flex;
    align-items: center;
    gap: 7px;
    margin-bottom: 5px;
}

.row svg {
    width: 20px;
    height: 20px;
}

.node {
    display: flex;
    align-items: center;
    gap: 11px;
    height: 25px;
    padding: 0 15px 0 3px;
    background-color: #f1f1f1;
}

.leaves .node {
    gap: 12px;
    padding-right: 13px;
}

.node > span {
    padding-left: 7px;
}

.root {
    gap: 3px;
    padding-right: 8px;
}

.root > .active {
    display: flex;
    align-items: center;
    gap: 18px;
    margin-left: 5px;
    padding: 0 15px 0 4px;
    background-color: #999;
    color: #fff;
    font-size: 14px;
    font-weight: bold;
}

.canvas-foot {
    position: relative;
    display: grid;
    grid-template-columns: 1fr auto 1fr;
    align-items: end;
    width: 100%;
    margin-top: auto;
}

.comments {
    border-top: none;
    padding-left: 19px;
}

.navbar {
    display: flex;
    align-items: center;
    gap: 10px;
    height: 30px;
    padding: 0 4px 0 3px;
    background-color: #f1f1f1;
}

.navbar button {
    gap: 1px;
}

.navbar svg:not(.caret) {
    width: 22px;
    height: 22px;
}

.navbar .nav-wide {
    gap: 5px;
}

.nav-wide:first-child {
    margin-right: -4px;
}

.nav-views {
    display: flex;
    gap: 6px;
    margin-left: 7px;
}

/* timeline */
.timeline {
    display: flex;
    align-items: center;
    height: 60px;
    padding: 0 11px;
    border-top: 3px solid #cfcfcf;
    background-color: #f1f1f1;
}

.playback {
    display: flex;
    gap: 11px;
    padding-top: 3px;
}

.playback svg,
.settings svg {
    width: 20px;
    height: 20px;
}

.features {
    display: flex;
    align-items: flex-start;
    margin-left: 22px;
    padding-top: 15px;
}

.features li {
    width: 30px;
    height: 36px;
    padding-left: 5px;
    background-image: linear-gradient(#ccc, #ccc), linear-gradient(#ccc, #ccc);
    background-position: 14px 25px, 0 32px;
    background-size: 2px 7px, 100% 2px;
    background-repeat: no-repeat;
}

.features li:first-child {
    background-position: 14px 25px, 14px 32px;
}

.features li:nth-last-child(2) {
    background-size: 2px 7px, 16px 2px;
}

.features svg {
    width: 20px;
    height: 20px;
}

.features .marker {
    width: 16px;
    margin: -8px 0 0 -8px;
    padding: 0;
    background: none;
}

.features .marker svg {
    width: 16px;
    height: 40px;
}

.settings {
    margin-left: auto;
    padding-top: 2px;
}

.taskbar {
    display: flex;
    height: 2px;
    padding-left: 60px;
    background-color: #333;
}

.taskbar span {
    width: 430px;
    margin-right: 312px;
    background-color: #c9c9c9;
}

.taskbar i {
    width: 61px;
    background-color: #666;
}
```
